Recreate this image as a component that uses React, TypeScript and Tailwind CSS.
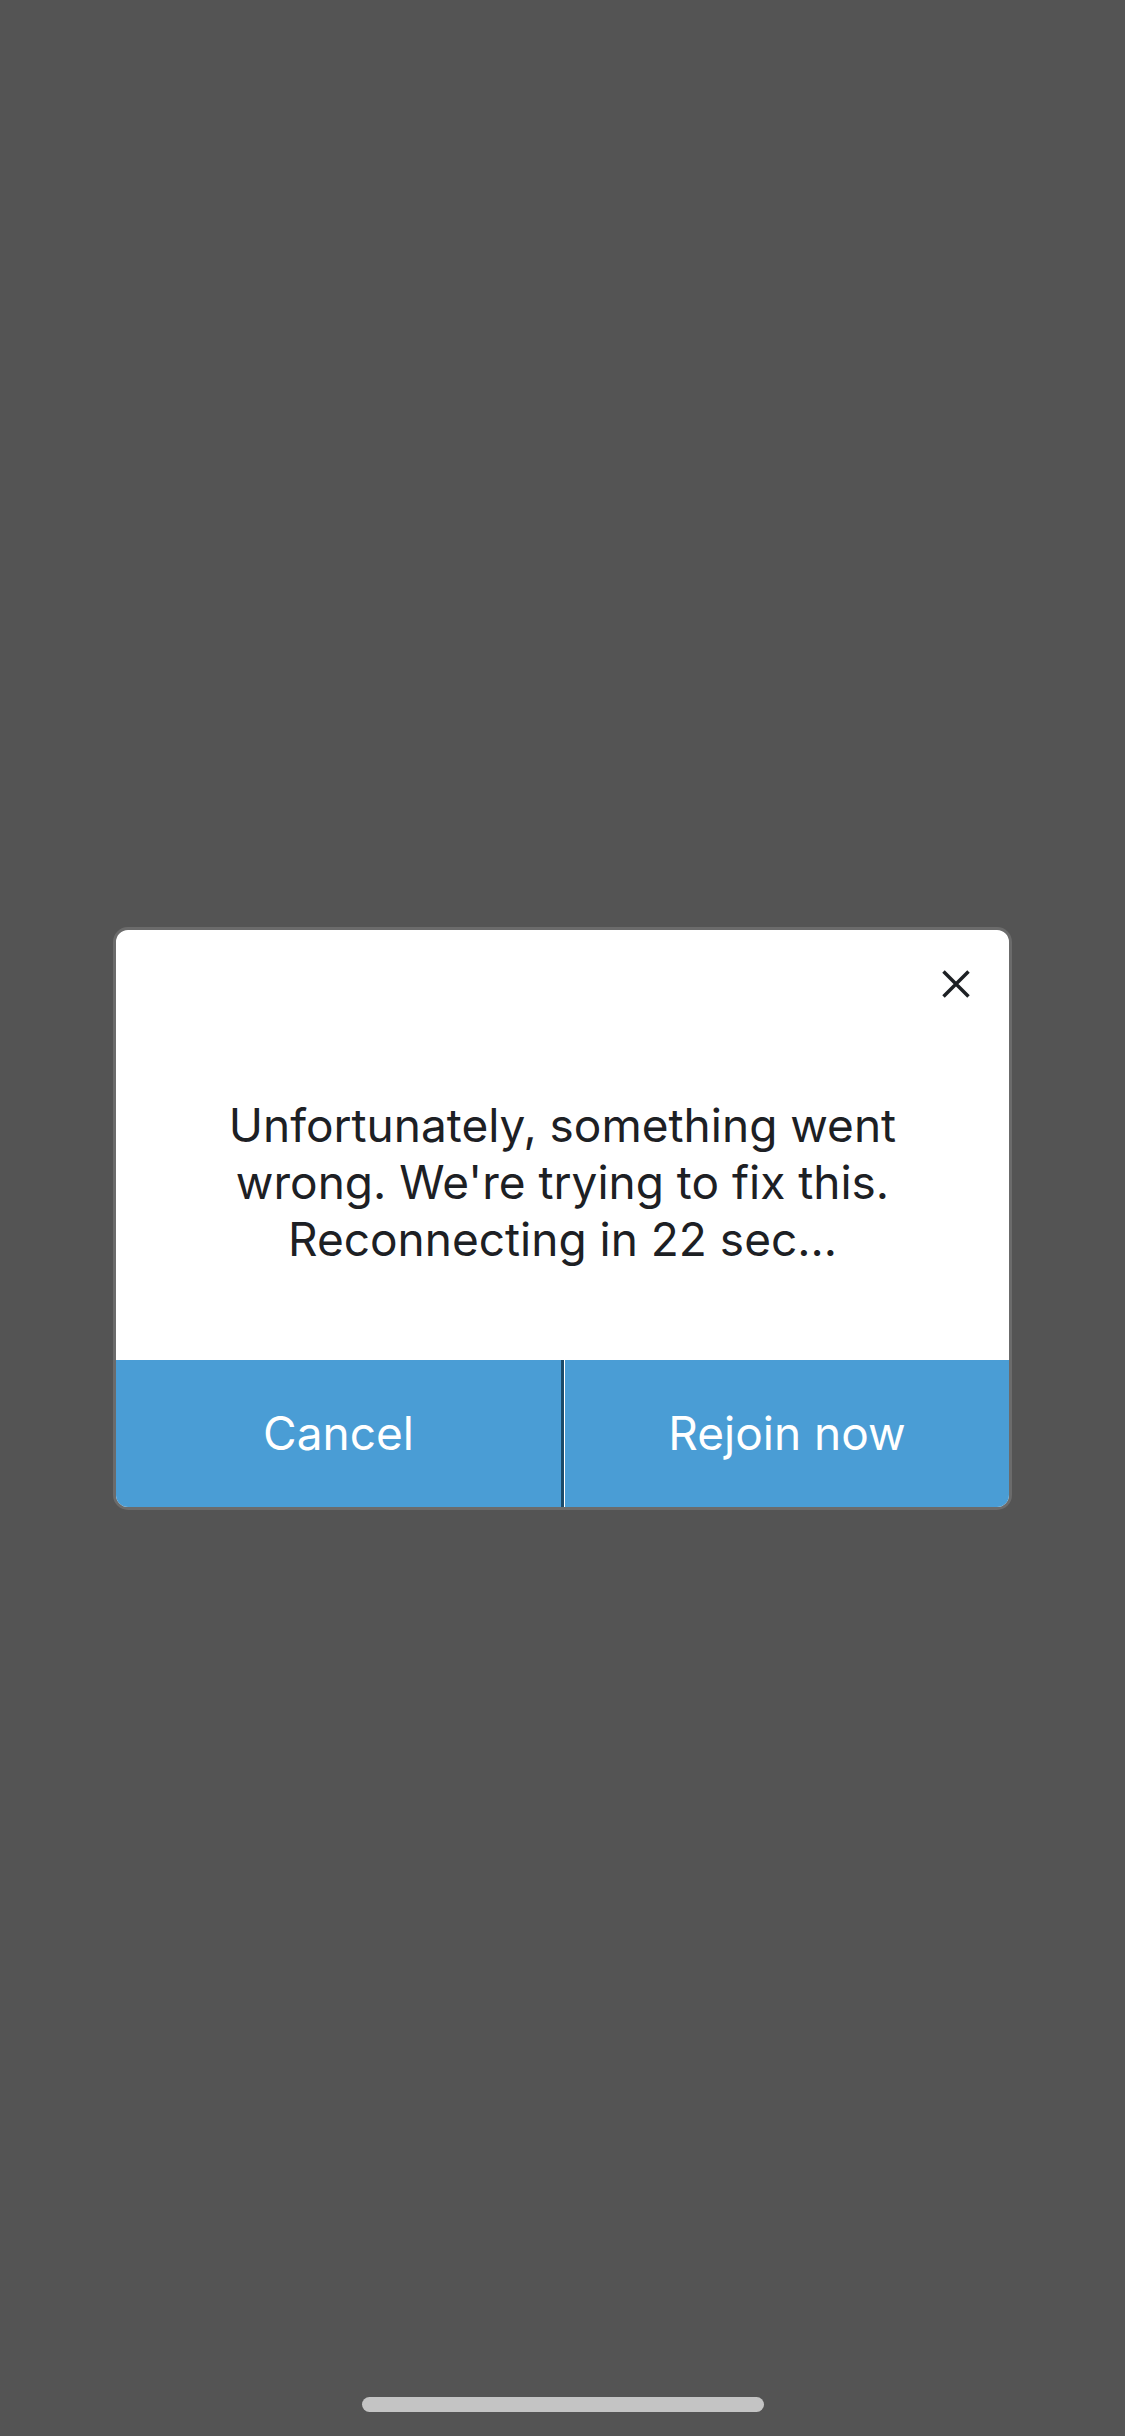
import React from "react";

export default function App() {
  return (
    <div
      className="relative flex h-[2436px] w-full items-center justify-center bg-[#545454]"
      style={{ fontFamily: "Inter, 'Noto Sans', sans-serif" }}
    >
      <div className="flex w-[899px] flex-col overflow-hidden rounded-[15px] border-[3px] border-[#6b6b6b] bg-white">
        <div className="flex h-[430px] flex-col">
          <div className="flex justify-end pr-[39px] pt-[40px]">
            <button className="flex h-[28px] w-[28px] items-center justify-center" aria-label="Close">
              <svg width="28" height="28" viewBox="0 0 28 28" fill="none">
                <path d="M1.5 1.5 L26.5 26.5 M26.5 1.5 L1.5 26.5" stroke="#1d2024" strokeWidth="3.5" />
              </svg>
            </button>
          </div>
          <p className="mt-[99px] px-[30px] text-center text-[46px] leading-[57px] text-[#1d2024]">
            Unfortunately, something went
            <br />
            wrong. We're trying to fix this.
            <br />
            Reconnecting in 22 sec...
          </p>
        </div>
        <div className="flex h-[147px] bg-[#4a9dd5]">
          <button className="flex w-[445px] items-center justify-center text-[46px] leading-none text-white">
            Cancel
          </button>
          <div className="w-[3px] bg-[#1b4a69]" />
          <div className="w-[1px] bg-white" />
          <button className="flex flex-1 items-center justify-center text-[46px] leading-none text-white">
            Rejoin now
          </button>
        </div>
      </div>
      <div className="absolute bottom-[24px] left-[362px] h-[15px] w-[402px] rounded-full bg-[#c4c4c4]" />
    </div>
  );
}
